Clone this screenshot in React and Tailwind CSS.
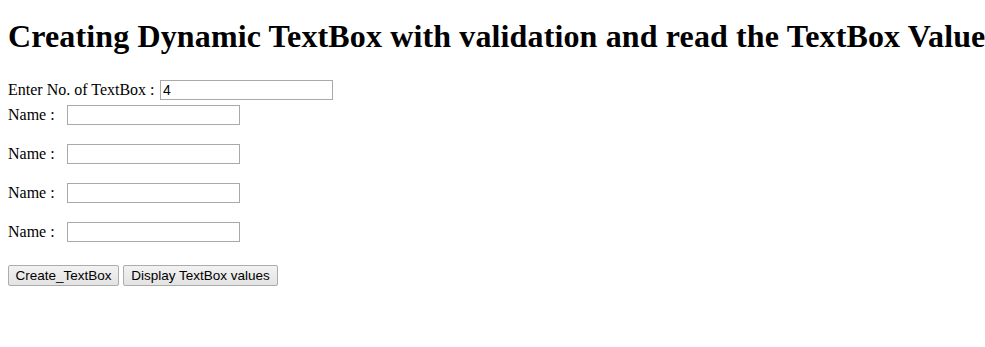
import { useState } from 'react';

const serif = { fontFamily: '"Liberation Serif", "Times New Roman", serif' };
const sans = { fontFamily: '"Liberation Sans", Arial, sans-serif' };

const App = () => {
  const [count, setCount] = useState('4');
  const [values, setValues] = useState(['', '', '', '']);

  const handleCreate = () => {
    const n = parseInt(count, 10);
    if (isNaN(n) || n < 1) {
      alert('Please enter a valid number');
      return;
    }
    setValues(Array.from({ length: n }, (_, i) => values[i] || ''));
  };

  const handleDisplay = () => {
    alert(values.join('\n'));
  };

  return (
    <div className="min-h-[347px] bg-white px-2 text-black text-[16px]" style={serif}>
      {/* Heading */}
      <h1 className="pt-[18px] pb-[25px] text-[32px] font-bold leading-[37px] tracking-[0.13px] whitespace-nowrap">
        Creating Dynamic TextBox with validation and read the TextBox Value
      </h1>

      {/* Count row */}
      <div className="flex h-[20px] items-start leading-[20px]">
        <span className="w-[152px] whitespace-nowrap">Enter No. of TextBox :</span>
        <input
          type="text"
          value={count}
          onChange={e => setCount(e.target.value)}
          className="h-[20px] w-[173px] border border-[#a9a9a9] px-[2px] text-[14px] leading-[18px] outline-none"
          style={sans}
        />
      </div>

      {/* Dynamic textboxes */}
      <div className="mt-[5px] flex flex-col gap-[19px]">
        {values.map((v, i) => (
          <div key={i} className="flex h-[20px] items-start leading-[20px]">
            <span className="w-[59px] whitespace-nowrap">Name :</span>
            <input
              type="text"
              value={v}
              onChange={e => {
                const next = [...values];
                next[i] = e.target.value;
                setValues(next);
              }}
              className="h-[20px] w-[173px] border border-[#a9a9a9] px-[2px] text-[14px] leading-[18px] outline-none"
              style={sans}
            />
          </div>
        ))}
      </div>

      {/* Buttons */}
      <div className="mt-[23px] flex gap-[4px] text-[13.5px]" style={sans}>
        <button
          onClick={handleCreate}
          className="h-[21px] w-[111px] rounded-[2px] border border-[#acacac] bg-gradient-to-b from-[#f2f2f2] to-[#e3e3e3] leading-[19px]"
        >
          Create_TextBox
        </button>
        <button
          onClick={handleDisplay}
          className="h-[21px] w-[155px] rounded-[2px] border border-[#acacac] bg-gradient-to-b from-[#f2f2f2] to-[#e3e3e3] leading-[19px]"
        >
          Display TextBox values
        </button>
      </div>
    </div>
  );
};

export default App;
